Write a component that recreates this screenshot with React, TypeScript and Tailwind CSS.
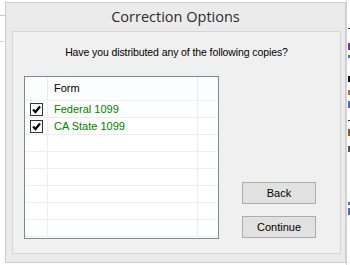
import React from 'react';

const rows = [
  { name: 'Federal 1099', checked: true },
  { name: 'CA State 1099', checked: true },
  { name: '', checked: false },
  { name: '', checked: false },
  { name: '', checked: false },
  { name: '', checked: false },
  { name: '', checked: false },
  { name: '', checked: false },
];

// bits of the window behind, peeking out on the right
const peeks = [
  { h: 'h-[1px]', c: 'bg-[#333]', mt: 'mt-[28px]' },
  { h: 'h-[7px]', c: 'bg-[#6a3a7a]', mt: 'mt-[14px]' },
  { h: 'h-[3px]', c: 'bg-[#4a6fba]', mt: 'mt-[5px]' },
  { h: 'h-[6px]', c: 'bg-[#111]', mt: 'mt-[18px]' },
  { h: 'h-[5px]', c: 'bg-[#9a7a50]', mt: 'mt-[8px]' },
  { h: 'h-[7px]', c: 'bg-[#4a6fba]', mt: 'mt-[6px]' },
  { h: 'h-[1px]', c: 'bg-[#333]', mt: 'mt-[12px]' },
  { h: 'h-[7px]', c: 'bg-[#8a5a20]', mt: 'mt-[8px]' },
  { h: 'h-[6px]', c: 'bg-[#555]', mt: 'mt-[10px]' },
  { h: 'h-[3px]', c: 'bg-[#4a6fba]', mt: 'mt-[50px]' },
  { h: 'h-[7px]', c: 'bg-[#4a6fba]', mt: 'mt-[3px]' },
];

function CheckBox() {
  return (
    <div className="w-[13px] h-[13px] border border-[#333] bg-white flex items-center justify-center">
      <svg width="9" height="9" viewBox="0 0 9 9">
        <path d="M1 4.5 L3.5 7 L8 1.5" fill="none" stroke="#000" strokeWidth="2.2" />
      </svg>
    </div>
  );
}

export default function App() {
  return (
    <div className="w-[350px] h-[265px] bg-white relative overflow-hidden" style={{ fontFamily: '"Liberation Sans", Arial, sans-serif' }}>
      {/* window behind the dialog */}
      <div className="absolute left-0 top-0 w-[5px] h-full flex flex-col">
        <div className="h-[16px] border-b border-[#c8c8c8]" />
        <div className="h-[26px] border-b border-[#cfe0f3]" />
      </div>
      <div className="absolute right-0 top-0 w-[4px] h-full border-l border-[#d4d4d4] flex flex-col pl-[1px]">
        {peeks.map((p, i) => (
          <div key={i} className={`w-[2px] shrink-0 ${p.h} ${p.c} ${p.mt}`} />
        ))}
      </div>

      {/* dialog */}
      <div className="absolute left-[5px] top-[2px] w-[341px] h-[261px] bg-[#ebebeb] border border-[#cdcdcd] flex flex-col">
        <div className="h-[28px] flex items-center justify-center text-[14.5px] text-[#2b2b2b]" style={{ fontFamily: '"Open Sans", "Liberation Sans", sans-serif' }}>
          Correction Options
        </div>
        <div className="ml-[6px] mr-[5px] w-[329px] h-[223px] bg-[#f0f0f0] border border-[#d6d6d6] flex flex-col">
          <div className="h-[44px] flex items-center justify-center text-[10.5px] tracking-[-0.1px] text-black pb-[2px]">
            Have you distributed any of the following copies?
          </div>
          <div className="flex pl-[11px] gap-[23px]">
            <div className="w-[195px] h-[163px] bg-white border border-[#828790] flex flex-col overflow-hidden">
              <div className="h-[24px] flex border-b border-[#eef2f7] bg-[#fcfdfe] shrink-0">
                <div className="w-[23px] border-r border-[#e4ecf5]" />
                <div className="w-[150px] border-r border-[#e4ecf5] flex items-center pl-[6px] text-[11px] text-black">Form</div>
                <div className="flex-1" />
              </div>
              {rows.map((r, i) => (
                <div key={i} className="h-[17px] flex border-b border-[#eeeeee] shrink-0">
                  <div className="w-[23px] border-r border-[#eeeeee] flex items-center justify-center pl-[1px]">
                    {r.checked && <CheckBox />}
                  </div>
                  <div className="w-[150px] border-r border-[#eeeeee] flex items-center pl-[6px] text-[11px] text-[#008000]">{r.name}</div>
                  <div className="flex-1" />
                </div>
              ))}
            </div>
            <div className="flex flex-col pt-[106px] gap-[12px]">
              <button className="w-[74px] h-[22px] bg-[#e1e1e1] border border-[#adadad] text-[11px] text-black flex items-center justify-center">Back</button>
              <button className="w-[74px] h-[22px] bg-[#e1e1e1] border border-[#adadad] text-[11px] text-black flex items-center justify-center">Continue</button>
            </div>
          </div>
        </div>
      </div>
    </div>
  );
}
